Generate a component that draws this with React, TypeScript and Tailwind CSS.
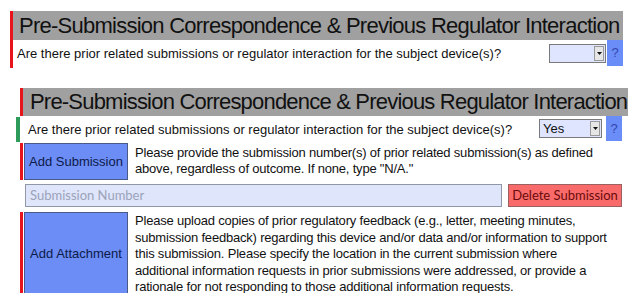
import React from "react";

const Select = ({ value, w }: { value: string; w: string }) => (
  <div className={`${w} h-[19px] flex items-stretch border border-[#7a7a7a] bg-[#dfe5ff]`}>
    <div className="flex-1 pl-[3px] text-[13px] leading-[17px] text-[#111]">{value}</div>
    <div className="w-[10px] my-[1px] mr-[1px] bg-[#e6e6e6] border border-[#9a9a9a] flex items-center justify-center">
      <svg width="5" height="3" viewBox="0 0 5 3"><path d="M0 0h5L2.5 3z" fill="#111" /></svg>
    </div>
  </div>
);

const Help = ({ h }: { h: string }) => (
  <div className={`w-[16px] ${h} bg-[#6b8df7] text-[13px] text-[#3347b0] flex items-center justify-center`}>?</div>
);

export default function App() {
  return (
    <div className="w-[631px] h-[293px] overflow-hidden bg-white font-['Liberation_Sans',Arial,sans-serif] text-[#111]">
      {/* Section 1 */}
      <div className="pt-[11px] pl-[10px]">
        <div className="w-[613px] border-l-[3px] border-[#e8141c]">
          <div className="h-[29px] bg-[#a0a0a0] pl-[6px] text-[22px] leading-[29px] tracking-[-0.75px] whitespace-nowrap">
            Pre-Submission Correspondence &amp; Previous Regulator Interaction
          </div>
          <div className="h-[28px] flex items-start pl-[4px]">
            <span className="flex-1 text-[13px] leading-[28px] whitespace-nowrap">
              Are there prior related submissions or regulator interaction for the subject device(s)?
            </span>
            <div className="mt-[4px] mr-[1px]">
              <Select value="" w="w-[57px]" />
            </div>
            <Help h="h-[26px]" />
          </div>
        </div>
      </div>

      {/* Section 2 */}
      <div className="pt-[20px] pl-[16px] w-[628px]">
        <div className="ml-[4px] border-l-[3px] border-[#e8141c] h-[28px] bg-[#a0a0a0] pl-[7px] text-[22px] leading-[28px] tracking-[-0.8px] whitespace-nowrap">
          Pre-Submission Correspondence &amp; Previous Regulator Interaction
        </div>
        <div className="mt-[1px] border-l-4 border-[#2e9b5b] h-[25px] flex items-start pl-[8px]">
          <span className="flex-1 text-[13px] leading-[25px] whitespace-nowrap">
            Are there prior related submissions or regulator interaction for the subject device(s)?
          </span>
          <div className="mt-[2px] mr-[4px]">
            <Select value="Yes" w="w-[63px]" />
          </div>
          <div className="-mt-[1px]">
            <Help h="h-[25px]" />
          </div>
          <div className="w-[6px]" />
        </div>
        <div className="ml-[4px] mt-[1px] border-l-[3px] border-[#e8141c] flex items-stretch h-[37px]">
          <div className="ml-[1px] w-[104px] shrink-0 bg-[#6b8df5] border border-[#4a5a86] flex items-center justify-center text-[13px] text-[#0d1a4a]">
            Add Submission
          </div>
          <div className="pl-[7px] pt-[2px] text-[13px] leading-[16px] tracking-[-0.2px] whitespace-nowrap">
            Please provide the submission number(s) of prior related submission(s) as defined
            <br />
            above, regardless of outcome. If none, type "N/A."
          </div>
        </div>
        <div className="flex items-center mt-[4px] ml-[9px] h-[23px]">
          <div className="w-[477px] h-[23px] bg-[#dfe5fb] border border-[#9098a8] pl-[4px] font-['Lato',sans-serif] text-[13px] leading-[21px] text-[#9aa3b8]">
            Submission Number
          </div>
          <div className="ml-[6px] w-[114px] h-[23px] bg-[#f96b6b] border border-[#9b6060] flex items-center justify-center font-['Lato',sans-serif] text-[13px] text-[#6a0a0a]">
            Delete Submission
          </div>
        </div>
        <div className="ml-[4px] mt-[5px] border-l-[3px] border-[#e8141c] flex items-stretch">
          <div className="ml-[1px] w-[104px] shrink-0 bg-[#6b8df5] border border-[#4a5a86] flex items-center justify-center text-[13px] text-[#0d1a4a]">
            Add Attachment
          </div>
          <div className="pl-[7px] pt-[1px] text-[13px] leading-[16.5px] tracking-[-0.2px] whitespace-nowrap">
            Please upload copies of prior regulatory feedback (e.g., letter, meeting minutes,
            <br />
            submission feedback) regarding this device and/or data and/or information to support
            <br />
            this submission. Please specify the location in the current submission where
            <br />
            additional information requests in prior submissions were addressed, or provide a
            <br />
            rationale for not responding to those additional information requests.
          </div>
        </div>
      </div>
    </div>
  );
}
